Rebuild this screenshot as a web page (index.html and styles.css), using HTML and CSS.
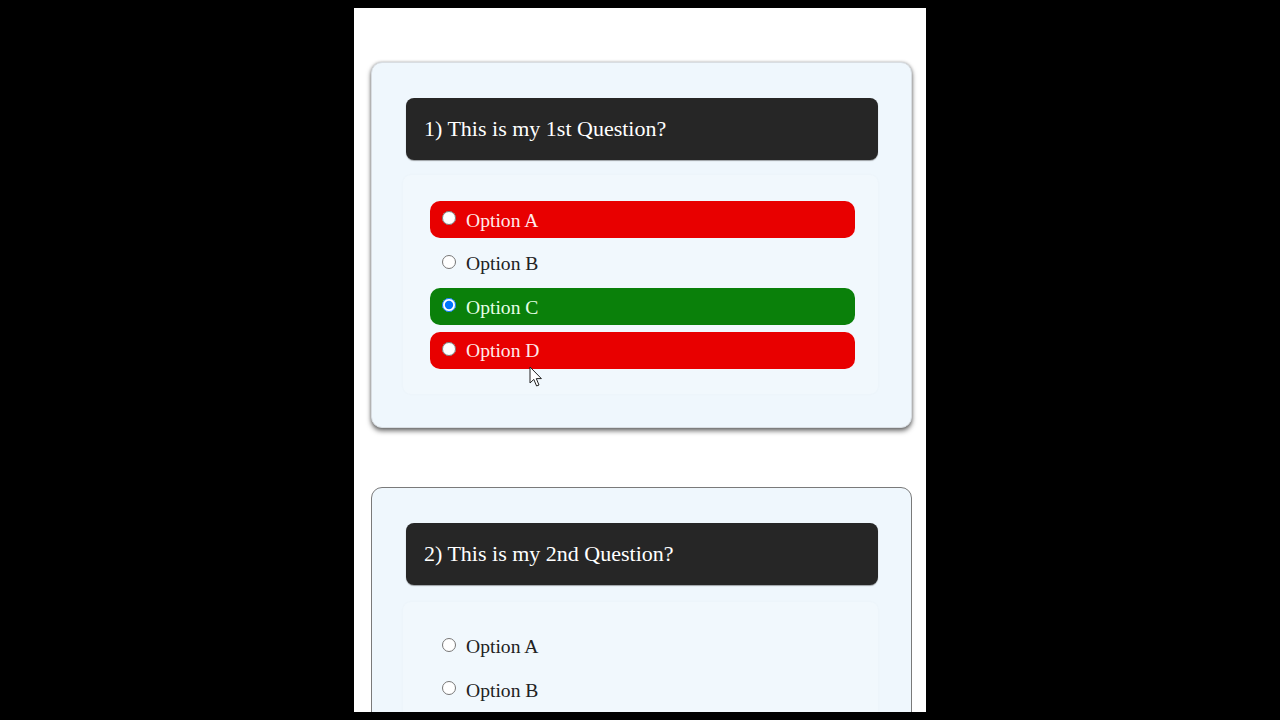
FILE: index.html
```html
<!DOCTYPE html>
<html lang="en">
<head>
<meta charset="utf-8">
<title>Quiz</title>
<link rel="stylesheet" href="styles.css">
</head>
<body>
<div class="screen">
  <div class="card card-active">
    <div class="question">1) This is my 1st Question?</div>
    <div class="options">
      <label class="option wrong"><input type="radio" name="q1"><span>Option A</span></label>
      <label class="option"><input type="radio" name="q1"><span>Option B</span></label>
      <label class="option right"><input type="radio" name="q1" checked><span>Option C</span></label>
      <label class="option wrong"><input type="radio" name="q1"><span>Option D</span></label>
    </div>
  </div>
  <div class="card card-idle">
    <div class="question">2) This is my 2nd Question?</div>
    <div class="options">
      <label class="option"><input type="radio" name="q2"><span>Option A</span></label>
      <label class="option"><input type="radio" name="q2"><span>Option B</span></label>
      <label class="option"><input type="radio" name="q2"><span>Option C</span></label>
      <label class="option"><input type="radio" name="q2"><span>Option D</span></label>
    </div>
  </div>
  <svg class="cursor" width="14" height="22" viewBox="0 0 14 22">
    <path d="M1 1 L1 17 L4.8 13.4 L7.6 20 L10 19 L7.3 12.6 L12.4 12.6 Z" fill="#fff" stroke="#222" stroke-width="1" stroke-linejoin="round"/>
  </svg>
</div>
</body>
</html>
```

FILE: styles.css
```css
html, body {
  margin: 0;
  padding: 0;
  background: #000;
}

.screen {
  position: relative;
  width: 572px;
  height: 704px;
  margin: 8px auto 0;
  background: #fff;
  overflow: hidden;
  box-sizing: border-box;
  padding: 54px 14px 0 17px;
  font-family: "Liberation Serif", "Times New Roman", serif;
}

.card {
  border: 1px solid #7a7a7a;
  border-radius: 11px;
  background: #eff7fd;
  padding: 35px 33px 33px 34px;
  margin-bottom: 59px;
}

.card-active {
  border-color: #d8dde2;
  box-shadow: 0 3px 5px rgba(0, 0, 0, 0.55), 0 0 3px rgba(0, 0, 0, 0.25);
}

.card-idle .options {
  margin-top: 17px;
}

.question {
  height: 62px;
  display: flex;
  align-items: center;
  padding: 0 18px;
  background: #262626;
  color: #fff;
  border-radius: 8px;
  font-size: 22px;
  box-shadow: 0 1px 1px rgba(0, 0, 0, 0.35);
}

.options {
  margin: 15px 0 0 -3px;
  padding: 26px 23px 25px 27px;
  background: #f1f8fd;
  border-radius: 8px;
  box-shadow: 0 0 3px rgba(0, 0, 0, 0.03);
  display: flex;
  flex-direction: column;
  gap: 6.5px;
}

.option {
  height: 37px;
  display: flex;
  align-items: center;
  padding-left: 11px;
  border-radius: 10px;
  font-size: 19.6px;
  color: #222;
}

.option span {
  margin-top: 2px;
}

.option input {
  width: 14px;
  height: 14px;
  margin: -3px 10px 0 1px;
}

.option.wrong {
  background: #e80000;
  color: #ffeaea;
}

.option.right {
  background: #0a800a;
  color: #e6ffe6;
}

.cursor {
  position: absolute;
  left: 175px;
  top: 358px;
}
```
